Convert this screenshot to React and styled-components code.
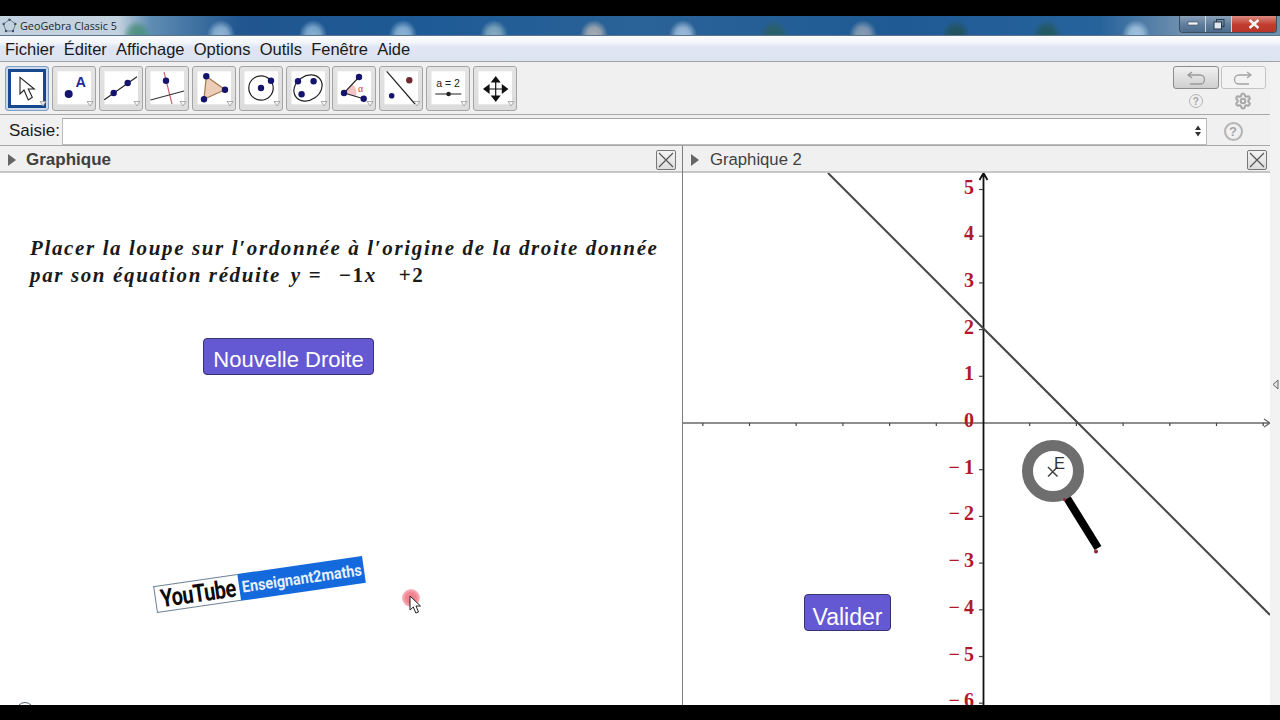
import React from "react";
import styled, { createGlobalStyle } from "styled-components";
import { Settings } from "lucide-react";

const GlobalStyle = createGlobalStyle`
  html, body {
    margin: 0;
    padding: 0;
    background: #000;
    font-family: "Liberation Sans", Arial, sans-serif;
  }
`;

// blurred desktop icons behind the aero title bar: [x, colour]
const blurs = [
  [137, "#3f8a6f"], [221, "#a9cbe6"], [313, "#a3c8e4"], [403, "#a9cbe6"], [494, "#9dbfca"],
  [594, "#c9c0b8"], [683, "#bcd3ec"], [774, "#2c5f5c"], [863, "#a5b0bb"], [956, "#24504f"],
  [1047, "#23564f"], [1136, "#b8d6ef"],
];

const titleBackground = [
  ...blurs.map(
    ([x, c]) => `radial-gradient(ellipse 14px 15px at ${x}px 19px, ${c}cc 0%, ${c}aa 50%, ${c}00 100%)`
  ),
  "linear-gradient(90deg, #c3d2de 0, #c3d2de 118px, #5f8db3 150px, #21568f 240px, #1e5a96 420px, #2a6397 640px, #1f5a94 900px, #27639b 1100px, #6d8fae 1180px)",
].join(", ");

const Page = styled.div`
  display: flex;
  flex-direction: column;
  width: 1280px;
  height: 720px;
  padding: 16px 0 15px;
  box-sizing: border-box;
  background: #000;
  overflow: hidden;
`;

const TitleBar = styled.div`
  display: flex;
  align-items: flex-start;
  justify-content: space-between;
  flex: 0 0 20px;
  background: ${titleBackground};
  border-bottom: 1px solid #5b7590;
  box-sizing: border-box;
`;

const TitleLeft = styled.div`
  display: flex;
  align-items: center;
  gap: 3px;
  padding: 2px 0 0 2px;
`;

const TitleText = styled.span`
  font-family: "Open Sans", sans-serif;
  font-size: 10.8px;
  color: #1c2630;
  line-height: 15px;
`;

const WindowButtons = styled.div`
  display: flex;
  height: 16px;
  margin-right: 3px;
  border: 1px solid #3c4d60;
  border-top: 0;
  border-radius: 0 0 4px 4px;
  overflow: hidden;
`;

const WindowButton = styled.div`
  display: flex;
  align-items: center;
  justify-content: center;
  width: ${(p) => p.$w}px;
  border-right: 1px solid #c8d4e0;
  background: ${(p) =>
    p.$close
      ? "linear-gradient(#d98a80, #c23b2e 55%, #b5352a)"
      : "linear-gradient(#8aa0b8, #5f7d9c 55%, #4d6b8c)"};
  &:last-child {
    border-right: 0;
  }
`;

const MenuBar = styled.div`
  display: flex;
  align-items: center;
  gap: 9.2px;
  flex: 0 0 26px;
  padding: 1px 0 0 5px;
  box-sizing: border-box;
  background: linear-gradient(#fbfcfe 0, #f3f6fb 25%, #dfe5f2 45%, #dde4f1 100%);
  border-bottom: 1px solid #a3a3a3;
`;

const MenuItem = styled.span`
  font-size: 16.5px;
  color: #1a1a1a;
`;

const Workspace = styled.div`
  display: flex;
  flex: 1;
  min-height: 0;
`;

const MainColumn = styled.div`
  display: flex;
  flex-direction: column;
  width: 1270px;
`;

const SideStrip = styled.div`
  display: flex;
  align-items: flex-start;
  justify-content: center;
  flex: 1;
  padding-top: 317px;
  background: #f2f2f2;
`;

const Toolbar = styled.div`
  display: flex;
  justify-content: space-between;
  flex: 0 0 53px;
  padding: 4px 4px 0 5px;
  box-sizing: border-box;
  background: #f0f0f0;
  border-bottom: 1px solid #a8a8a8;
`;

const ToolList = styled.div`
  display: flex;
  gap: 2.75px;
`;

const ToolButton = styled.div`
  width: 44px;
  height: 45px;
  box-sizing: border-box;
  border: 1px solid ${(p) => (p.$active ? "#7f9fc4" : "#a4a4a4")};
  border-radius: 3px;
  background: ${(p) => (p.$active ? "#fff" : "linear-gradient(#e4e4e4, #dcdcdc)")};
  box-shadow: ${(p) => (p.$active ? "inset 0 0 0 2px #cbd9ea, inset 0 0 0 5px #17478c" : "none")};
  svg {
    display: block;
    width: 42px;
    height: 43px;
  }
`;

const HistoryColumn = styled.div`
  display: flex;
  flex-direction: column;
  gap: 3px;
`;

const HistoryRow = styled.div`
  display: flex;
  gap: 2px;
`;

const HistoryButton = styled.div`
  display: flex;
  align-items: center;
  justify-content: center;
  width: 45.5px;
  height: 23px;
  box-sizing: border-box;
  border: 1px solid ${(p) => (p.$dark ? "#8c8c8c" : "#c4c4c4")};
  border-radius: 3px;
  background: ${(p) => (p.$dark ? "linear-gradient(#f1f1f1, #cfcfcf)" : "#f3f3f3")};
`;

const HistoryTool = styled.div`
  display: flex;
  align-items: center;
  justify-content: center;
  width: 45.5px;
`;

const HelpDot = styled.span`
  display: flex;
  align-items: center;
  justify-content: center;
  width: ${(p) => p.$size}px;
  height: ${(p) => p.$size}px;
  box-sizing: border-box;
  border: ${(p) => (p.$size > 16 ? 2 : 1.5)}px solid #b4b4b4;
  border-radius: 50%;
  color: #a6a6a6;
  font-size: ${(p) => (p.$size > 16 ? 13 : 10)}px;
  font-weight: 700;
`;

const InputRow = styled.div`
  display: flex;
  align-items: center;
  flex: 0 0 31px;
  padding: 2px 0 0 9px;
  box-sizing: border-box;
  background: #f0f0f0;
  border-bottom: 1px solid #a8a8a8;
`;

const InputLabel = styled.label`
  width: 53px;
  font-size: 17px;
  color: #1a1a1a;
`;

const InputField = styled.div`
  display: flex;
  align-items: center;
  justify-content: flex-end;
  width: 1145px;
  height: 27px;
  padding-right: 4px;
  box-sizing: border-box;
  background: #fff;
  border: 1px solid #bcbcbc;
  border-top-color: #a5a5a5;
`;

const InputHelp = styled.div`
  display: flex;
  justify-content: center;
  width: 52px;
`;

const Panels = styled.div`
  display: flex;
  flex: 1;
  min-height: 0;
`;

const Panel = styled.section`
  display: flex;
  flex-direction: column;
  width: ${(p) => p.$w}px;
  background: #fff;
`;

const PanelHeader = styled.header`
  display: flex;
  align-items: center;
  flex: 0 0 27px;
  box-sizing: border-box;
  padding: 2px ${(p) => p.$right}px 0 8px;
  background: #f0f0f0;
  border-bottom: 2px solid #c6c6c6;
`;

const PanelTitle = styled.span`
  flex: 1;
  margin-left: ${(p) => p.$indent}px;
  font-size: ${(p) => (p.$bold ? 17 : 16.7)}px;
  font-weight: ${(p) => (p.$bold ? 700 : 400)};
  color: #404040;
`;

const CollapseArrow = styled.span`
  width: 0;
  height: 0;
  border-left: 8px solid #666;
  border-top: 6px solid transparent;
  border-bottom: 6px solid transparent;
`;

const CloseBox = styled.div`
  display: flex;
  align-items: center;
  justify-content: center;
  width: 20px;
  height: 20px;
  box-sizing: border-box;
  border: 1px solid #777;
  border-radius: 2px;
  background: linear-gradient(#f4f4f4, #dcdcdc);
`;

const Divider = styled.div`
  width: 1px;
  background: #7d7d7d;
`;

const Canvas = styled.div`
  position: relative;
  flex: 1;
  min-height: 0;
`;

const LeftCanvas = styled(Canvas)`
  padding: 62px 0 0 30px;
`;

const Statement = styled.div`
  font-family: "Liberation Serif", serif;
  font-style: italic;
  font-weight: 700;
  font-size: 21px;
  line-height: 27px;
  letter-spacing: 1.63px;
  color: #1a1a1a;
  white-space: nowrap;
`;

const MathPart = styled.span`
  margin-left: ${(p) => p.$gap || 0}px;
  font-style: ${(p) => (p.$italic ? "italic" : "normal")};
`;

const ActionButton = styled.div`
  display: flex;
  align-items: center;
  justify-content: center;
  width: ${(p) => p.$w}px;
  height: 37px;
  box-sizing: border-box;
  padding-top: 7px;
  background: #6459d2;
  border: 1px solid #37326f;
  border-radius: 4px;
  color: #fff;
  font-size: 22px;
`;

const NewLineButton = styled(ActionButton)`
  margin: 49px 0 0 173px;
`;

const ValidateButton = styled(ActionButton)`
  position: absolute;
  left: 121px;
  top: 421px;
  padding-top: 10px;
  font-size: 23px;
`;

const Banner = styled.div`
  display: flex;
  width: 211px;
  height: 27px;
  margin: 196px 0 0 124px;
  transform: rotate(-8.2deg);
`;

const BannerName = styled.div`
  display: flex;
  align-items: center;
  justify-content: center;
  flex: 0 0 85px;
  min-width: 0;
  box-sizing: border-box;
  background: #fff;
  border: 1px solid #6d8196;
  border-right: 0;
  font-family: Roboto, sans-serif;
  font-size: 25px;
  font-weight: 700;
  letter-spacing: -0.6px;
  color: #0c0c0c;
  span {
    flex: none;
    transform: scaleX(0.8);
  }
`;

const BannerChannel = styled.div`
  display: flex;
  align-items: center;
  justify-content: center;
  flex: 1;
  min-width: 0;
  background: #1469dc;
  font-family: Roboto, sans-serif;
  font-size: 16px;
  font-weight: 700;
  color: #e6f0fb;
  span {
    flex: none;
    transform: scaleX(0.9);
  }
`;

const MouseHalo = styled.span`
  position: absolute;
  left: 402px;
  top: 416px;
  width: 18px;
  height: 18px;
  border-radius: 50%;
  background: radial-gradient(circle, #f0838f 40%, #f7b9c0 70%, rgba(255, 255, 255, 0) 100%);
`;

const MouseCursor = styled.svg`
  position: absolute;
  left: 409px;
  top: 422px;
  width: 13px;
  height: 19px;
`;

const ClippedArc = styled.span`
  position: absolute;
  left: 16px;
  bottom: 0;
  width: 18px;
  height: 3px;
  overflow: hidden;
  &::before {
    content: "";
    display: block;
    width: 18px;
    height: 18px;
    box-sizing: border-box;
    border: 1px solid #55606c;
    border-radius: 50%;
  }
`;

const Plot = styled.svg`
  display: block;
  width: 587px;
  height: 532px;
`;

const Dot = ({ x, y, r = 3.2, c = "#14146e" }) => <circle cx={x} cy={y} r={r} fill={c} />;

// icon coordinates are relative to the button's outer corner
const tools = [
  <path d="M15 11.3V28l4-4 4.3 10 4-2.7-4-8.3h6z" fill="#fff" stroke="#222" strokeWidth="1.1" />,
  <>
    <Dot x={16.7} y={28} r={4} />
    <text x={23.5} y={21} fontSize="14.5" fontWeight="700" fill="#1d2f9c" fontFamily="Liberation Sans">A</text>
  </>,
  <>
    <path d="M5.3 33.7 38 10.7" stroke="#222" strokeWidth="1.1" />
    <Dot x={14.7} y={27} />
    <Dot x={28.7} y={17} />
  </>,
  <>
    <path d="M19 6 27 38" stroke="#d0616b" strokeWidth="1.1" />
    <path d="M5.5 34 39 25" stroke="#333" strokeWidth="1.1" />
    <Dot x={21} y={14.7} />
  </>,
  <>
    <path d="M14.3 10.3 33 23.7 12 33.3z" fill="#edcdb8" stroke="#a07a50" strokeWidth="1.2" />
    <Dot x={14.3} y={10.3} />
    <Dot x={33} y={23.7} />
    <Dot x={12} y={33.3} />
  </>,
  <>
    <circle cx="22" cy="22" r="12.2" fill="none" stroke="#222" strokeWidth="1.2" />
    <Dot x={22} y={22} />
    <Dot x={32} y={14.7} />
  </>,
  <>
    <ellipse cx="22" cy="22" rx="15" ry="12" fill="none" stroke="#222" strokeWidth="1.2" transform="rotate(-35 22 22)" />
    <Dot x={12} y={15.3} />
    <Dot x={27.6} y={15.3} />
    <Dot x={15.6} y={28.3} />
  </>,
  <>
    <path d="M12 27 21 18.5A12 12 0 0 1 24 30.5z" fill="#f4c6c2" />
    <path d="M27 11 12 27 31.7 32.7" fill="none" stroke="#222" strokeWidth="1.1" />
    <Dot x={12} y={27} />
    <Dot x={27} y={11} />
    <Dot x={31.7} y={32.7} />
    <text x={26} y={26} fontSize="10" fill="#c9404a" fontFamily="Liberation Serif">α</text>
  </>,
  <>
    <path d="M7.7 5.3 36 38" stroke="#222" strokeWidth="1.2" />
    <Dot x={30.3} y={14.3} c="#6e2a33" />
    <Dot x={12.7} y={29.7} r={2.8} />
  </>,
  <>
    <text x={22} y={21} textAnchor="middle" fontSize="10.5" fill="#222" fontFamily="Liberation Sans">a = 2</text>
    <path d="M9.3 28H35.3" stroke="#333" strokeWidth="1.1" />
    <Dot x={22.6} y={28} r={2.3} c="#222" />
  </>,
  <path
    d="M22.7 12v22M12 23h21.4M22.7 11l-3.8 5h7.6zM22.7 35l-3.8-5h7.6zM11 23l5-3.8v7.6zM34.4 23l-5-3.8v7.6z"
    fill="#111"
    stroke="#111"
    strokeWidth="1.2"
  />,
];

const ToolIcon = ({ children, active }) => (
  <svg viewBox="1 1 42 43">
    {!active && <rect x="5.5" y="5.3" width="33.5" height="33" fill="#fff" />}
    {children}
    <path d="M35 35.5h6l-3 4.5z" fill={active ? "#dfe7f2" : "#f5f5f5"} stroke="#9a9a9a" strokeWidth="0.8" />
  </svg>
);

const menus = ["Fichier", "Éditer", "Affichage", "Options", "Outils", "Fenêtre", "Aide"];

const TICK = 46.7;
const xTicks = [-6, -5, -4, -3, -2, -1, 1, 2, 3, 4, 5, 6];
const yLabels = [5, 4, 3, 2, 1, 0, -1, -2, -3, -4, -5, -6];

const GraphPlot = () => (
  <Plot viewBox="683 173 587 532">
    <path d="M683 423H1270M1264 419l6 4-6 4" fill="none" stroke="#6a6a6a" strokeWidth="1.4" />
    {xTicks.map((t) => (
      <path key={t} d={`M${983 + t * TICK} 423v3`} stroke="#444" strokeWidth="1.2" />
    ))}
    <path d="M983.5 173V705M979.5 180l4-7 4 7" fill="none" stroke="#111" strokeWidth="1.8" />
    {yLabels.map((t) => (
      <g key={t}>
        {t !== 0 && <path d={`M979 ${423 - t * TICK}h4`} stroke="#444" strokeWidth="1.2" />}
        <text
          x="974"
          y={423 - t * TICK + 4}
          textAnchor="end"
          fontFamily="Liberation Serif"
          fontWeight="700"
          fontSize="20"
          fill="#b2182b"
        >
          {t < 0 ? `−\u2009${-t}` : t}
        </text>
      </g>
    ))}
    <path d="M828 173 1270 615" stroke="#454545" strokeWidth="2" />
    <path d="M1067 498 1098 548" stroke="#000" strokeWidth="8" />
    <circle cx="1053" cy="471" r="25.5" fill="#fff" stroke="#6e6e6e" strokeWidth="11" />
    <circle cx="1064.5" cy="499.5" r="1.6" fill="#8a2a3a" />
    <circle cx="1096" cy="551.5" r="2" fill="#8a2a3a" />
    <path d="M1048 467l9.5 9.5M1057.5 467l-9.5 9.5" stroke="#444" strokeWidth="1.5" />
    <text x="1054" y="469" fontFamily="Liberation Sans" fontSize="16.5" fill="#333">E</text>
  </Plot>
);

const Help = ({ size }) => <HelpDot $size={size}>?</HelpDot>;

const CloseIcon = () => (
  <svg width="18" height="18" viewBox="0 0 18 18">
    <path d="M2 2 16 16M16 2 2 16" stroke="#555" strokeWidth="1.2" />
  </svg>
);

const App = () => {
  return (
    <>
      <GlobalStyle />
      <Page>
        <TitleBar>
          <TitleLeft>
            <svg width="15" height="15" viewBox="0 0 15 15">
              <path d="M7.5 1.5 13.5 6 11 13H4L1.5 6z" fill="none" stroke="#6d7f92" strokeWidth="1" />
              <circle cx="7.5" cy="1.8" r="1.2" fill="#3c4f68" />
              <circle cx="13.3" cy="6" r="1.2" fill="#3c4f68" />
              <circle cx="11" cy="13" r="1.2" fill="#3c4f68" />
              <circle cx="4" cy="13" r="1.2" fill="#3c4f68" />
              <circle cx="1.7" cy="6" r="1.2" fill="#3c4f68" />
            </svg>
            <TitleText>GeoGebra Classic 5</TitleText>
          </TitleLeft>
          <WindowButtons>
            <WindowButton $w={25}>
              <svg width="12" height="6" viewBox="0 0 12 6">
                <rect x="1" y="1" width="10" height="3" fill="#f2f5f8" stroke="#37475a" strokeWidth="0.6" />
              </svg>
            </WindowButton>
            <WindowButton $w={25}>
              <svg width="12" height="11" viewBox="0 0 12 11">
                <rect x="3.5" y="0.5" width="7.5" height="7" fill="none" stroke="#26384a" strokeWidth="1" />
                <rect x="1" y="3" width="7.5" height="7" fill="#dfe6ee" stroke="#26384a" strokeWidth="1" />
              </svg>
            </WindowButton>
            <WindowButton $w={44} $close>
              <svg width="14" height="10" viewBox="0 0 14 10">
                <path d="M2.5 1 11.5 9M11.5 1 2.5 9" stroke="#f6f6f6" strokeWidth="2.4" />
              </svg>
            </WindowButton>
          </WindowButtons>
        </TitleBar>
        <MenuBar>
          {menus.map((m) => (
            <MenuItem key={m}>{m}</MenuItem>
          ))}
        </MenuBar>
        <Workspace>
          <MainColumn>
            <Toolbar>
              <ToolList>
                {tools.map((icon, i) => (
                  <ToolButton key={i} $active={i === 0}>
                    <ToolIcon active={i === 0}>{icon}</ToolIcon>
                  </ToolButton>
                ))}
              </ToolList>
              <HistoryColumn>
                <HistoryRow>
                  <HistoryButton $dark>
                    <svg width="20" height="14" viewBox="0 0 20 14">
                      <path d="M6 1 2 4l4 3M2 4h12a4 4 0 0 1 0 9H4" fill="none" stroke="#9a9a9a" strokeWidth="1.3" />
                    </svg>
                  </HistoryButton>
                  <HistoryButton>
                    <svg width="20" height="14" viewBox="0 0 20 14">
                      <path d="M14 1l4 3-4 3M18 4H6a4 4 0 0 0 0 9h10" fill="none" stroke="#a4a4a4" strokeWidth="1.3" />
                    </svg>
                  </HistoryButton>
                </HistoryRow>
                <HistoryRow>
                  <HistoryTool>
                    <Help size={14} />
                  </HistoryTool>
                  <HistoryTool>
                    <Settings size={18} color="#a8a8a8" strokeWidth={2.8} />
                  </HistoryTool>
                </HistoryRow>
              </HistoryColumn>
            </Toolbar>
            <InputRow>
              <InputLabel>Saisie:</InputLabel>
              <InputField>
                <svg width="8" height="12" viewBox="0 0 8 12">
                  <path d="M4 0.5 7 5H1zM4 11.5 1 7h6z" fill="#333" />
                </svg>
              </InputField>
              <InputHelp>
                <Help size={19} />
              </InputHelp>
            </InputRow>
            <Panels>
              <Panel $w={682}>
                <PanelHeader $right={6}>
                  <CollapseArrow />
                  <PanelTitle $bold $indent={10}>Graphique</PanelTitle>
                  <CloseBox>
                    <CloseIcon />
                  </CloseBox>
                </PanelHeader>
                <LeftCanvas>
                  <Statement>
                    Placer la loupe sur l′ordonnée à l′origine de la droite donnée
                    <br />
                    par son équation réduite{" "}
                    <MathPart $italic $gap={3}>y</MathPart> <MathPart>= &nbsp;</MathPart>
                    <MathPart $gap={3}>−1</MathPart>
                    <MathPart $italic>x</MathPart> <MathPart $gap={8}>&nbsp;+2</MathPart>
                  </Statement>
                  <NewLineButton $w={171}>Nouvelle Droite</NewLineButton>
                  <Banner>
                    <BannerName>
                      <span>YouTube</span>
                    </BannerName>
                    <BannerChannel>
                      <span>Enseignant2maths</span>
                    </BannerChannel>
                  </Banner>
                  <MouseHalo />
                  <MouseCursor viewBox="0 0 13 19">
                    <path d="M1 1V15L4.3 12 6.8 18 9.5 17 7 11H11.5z" fill="#fff" stroke="#222" strokeWidth="1" />
                  </MouseCursor>
                  <ClippedArc />
                </LeftCanvas>
              </Panel>
              <Divider />
              <Panel $w={587}>
                <PanelHeader $right={3}>
                  <CollapseArrow />
                  <PanelTitle $indent={11}>Graphique 2</PanelTitle>
                  <CloseBox>
                    <CloseIcon />
                  </CloseBox>
                </PanelHeader>
                <Canvas>
                  <GraphPlot />
                  <ValidateButton $w={87}>Valider</ValidateButton>
                </Canvas>
              </Panel>
            </Panels>
          </MainColumn>
          <SideStrip>
            <svg width="7" height="11" viewBox="0 0 7 11">
              <path d="M6 1 1 5.5 6 10z" fill="#e4e4e4" stroke="#666" strokeWidth="1" />
            </svg>
          </SideStrip>
        </Workspace>
      </Page>
    </>
  );
};

export default App;
